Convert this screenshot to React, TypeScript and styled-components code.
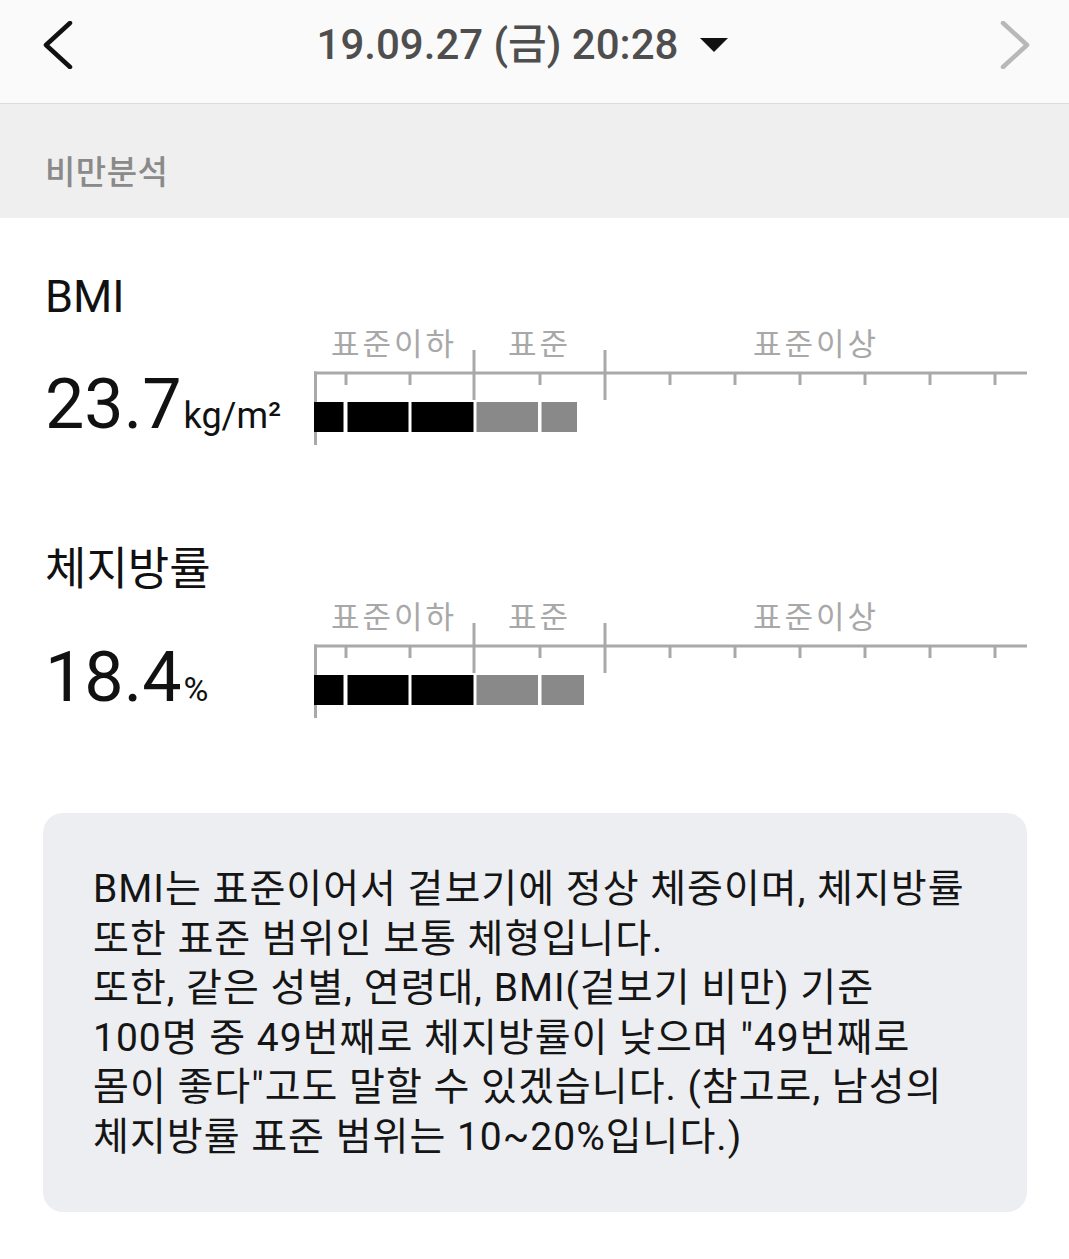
import styled, { createGlobalStyle } from "styled-components";

const GlobalStyle = createGlobalStyle`
  html, body {
    margin: 0;
    padding: 0;
    background: #ffffff;
  }
  body {
    font-family: Roboto, "Noto Sans CJK KR", sans-serif;
    color: #111;
  }
`;

const Page = styled.div`
  width: 1069px;
  min-height: 1259px;
  background: #fff;
`;

const Header = styled.header`
  height: 104px;
  background: #fafafa;
  border-bottom: 1px solid #dddddd;
  display: flex;
  align-items: center;
  justify-content: space-between;
  padding: 0 36px 14px 40px;
  box-sizing: border-box;
`;

const NavButton = styled.div`
  width: 36px;
  height: 50px;
  display: flex;
  align-items: center;
  justify-content: center;
`;

const TitleGroup = styled.div`
  display: flex;
  align-items: center;
  gap: 22px;
  margin-right: 28px;
`;

const Title = styled.span`
  font-family: Roboto, "Noto Sans CJK KR", sans-serif;
  font-size: 42px;
  font-weight: 500;
  color: #4e4e4e;
  line-height: 1;
  white-space: nowrap;
`;

const SectionBar = styled.div`
  height: 114px;
  background: #efefef;
  box-sizing: border-box;
  padding: 46px 45px 0;
`;

const SectionTitle = styled.span`
  font-family: "Noto Sans CJK KR", sans-serif;
  font-size: 33px;
  font-weight: 500;
  letter-spacing: 0.5px;
  color: #8a8a8a;
  line-height: 40px;
`;

const Content = styled.main`
  padding: 56px 42px 0 45px;
  display: flex;
  flex-direction: column;
  gap: 100px;
`;

const Metric = styled.section`
  display: flex;
  flex-direction: column;
`;

const MetricTitle = styled.div`
  font-size: 45px;
  line-height: 45px;
  color: #111;
  white-space: nowrap;
`;

const MetricRow = styled.div`
  display: grid;
  grid-template-columns: 269px 1fr;
  align-items: end;
  margin-top: 3px;
`;

const Value = styled.div`
  font-size: 70px;
  line-height: 70px;
  color: #111;
  margin-bottom: -4px;
  white-space: nowrap;
`;

const Unit = styled.span<{ $size: number }>`
  font-size: ${(p) => p.$size}px;
  margin-left: 2px;
`;

const Scale = styled.div`
  display: flex;
  flex-direction: column;
  width: 713px;
`;

const ScaleLabels = styled.div`
  display: grid;
  grid-template-columns: 160px 131px 1fr;
  height: 40px;
`;

const ScaleLabel = styled.span`
  font-family: "Noto Sans CJK KR", sans-serif;
  font-size: 31px;
  letter-spacing: 3px;
  line-height: 40px;
  color: #a8a8a8;
  text-align: center;
`;

const ScaleChart = styled.svg`
  display: block;
  margin-top: -15px;
`;

const InfoBox = styled.div`
  margin: 93px 42px 0 43px;
  background: #eceef1;
  border-radius: 20px;
  padding: 52px 20px 50px 50px;
`;

const InfoText = styled.p`
  margin: 0;
  font-family: Roboto, "Noto Sans CJK KR", sans-serif;
  font-size: 39px;
  letter-spacing: 1px;
  line-height: 49.5px;
  color: #151515;
  white-space: nowrap;
`;

const AXIS = "#a9a9a9";

const ScaleBar = ({ greyEnd }: { greyEnd: number }) => {
  const minor = [32, 96, 226, 356, 421, 486, 551, 616, 681];
  const black: [number, number][] = [
    [0, 29.5],
    [33.5, 94.5],
    [97.5, 159.5],
  ];
  const grey: [number, number][] = [
    [162.5, 224],
    [227.5, greyEnd],
  ];
  return (
    <ScaleChart width={713} height={100} viewBox="0 0 713 100">
      <line x1={0} y1={26} x2={713} y2={26} stroke={AXIS} strokeWidth={3} />
      <line x1={1.5} y1={24.5} x2={1.5} y2={98} stroke={AXIS} strokeWidth={3} />
      <line x1={160} y1={3} x2={160} y2={53} stroke={AXIS} strokeWidth={3} />
      <line x1={291} y1={3} x2={291} y2={53} stroke={AXIS} strokeWidth={3} />
      {minor.map((x) => (
        <line key={x} x1={x} y1={26} x2={x} y2={38} stroke={AXIS} strokeWidth={3} />
      ))}
      {black.map(([a, b]) => (
        <rect key={a} x={a} y={55} width={b - a} height={30} fill="#000" />
      ))}
      {grey.map(([a, b]) => (
        <rect key={a} x={a} y={55} width={b - a} height={30} fill="#898989" />
      ))}
    </ScaleChart>
  );
};

const ScaleBlock = ({ greyEnd }: { greyEnd: number }) => (
  <Scale>
    <ScaleLabels>
      <ScaleLabel>표준이하</ScaleLabel>
      <ScaleLabel>표준</ScaleLabel>
      <ScaleLabel>표준이상</ScaleLabel>
    </ScaleLabels>
    <ScaleBar greyEnd={greyEnd} />
  </Scale>
);

const App = () => {
  return (
    <Page>
      <GlobalStyle />
      <Header>
        <NavButton>
          <svg width="32" height="48" viewBox="0 0 32 48">
            <polyline
              points="28,2 4,24 28,46"
              fill="none"
              stroke="#111"
              strokeWidth="4.5"
              strokeLinecap="round"
              strokeLinejoin="round"
            />
          </svg>
        </NavButton>
        <TitleGroup>
          <Title>19.09.27 (금) 20:28</Title>
          <svg width="28" height="16" viewBox="0 0 28 16">
            <polygon points="0,1 28,1 14,15" fill="#111" />
          </svg>
        </TitleGroup>
        <NavButton>
          <svg width="32" height="48" viewBox="0 0 32 48">
            <polyline
              points="4,2 28,24 4,46"
              fill="none"
              stroke="#b8b8b8"
              strokeWidth="4.5"
              strokeLinecap="round"
              strokeLinejoin="round"
            />
          </svg>
        </NavButton>
      </Header>

      <SectionBar>
        <SectionTitle>비만분석</SectionTitle>
      </SectionBar>

      <Content>
        <Metric>
          <MetricTitle>BMI</MetricTitle>
          <MetricRow>
            <Value>
              23.7<Unit $size={36}>kg/m²</Unit>
            </Value>
            <ScaleBlock greyEnd={263} />
          </MetricRow>
        </Metric>
        <Metric>
          <MetricTitle>체지방률</MetricTitle>
          <MetricRow>
            <Value>
              18.4<Unit $size={34}>%</Unit>
            </Value>
            <ScaleBlock greyEnd={270} />
          </MetricRow>
        </Metric>
      </Content>

      <InfoBox>
        <InfoText>
          BMI는 표준이어서 겉보기에 정상 체중이며, 체지방률
          <br />
          또한 표준 범위인 보통 체형입니다.
          <br />
          또한, 같은 성별, 연령대, BMI(겉보기 비만) 기준
          <br />
          100명 중 49번째로 체지방률이 낮으며 "49번째로
          <br />
          몸이 좋다"고도 말할 수 있겠습니다. (참고로, 남성의
          <br />
          체지방률 표준 범위는 10~20%입니다.)
        </InfoText>
      </InfoBox>
    </Page>
  );
};

export default App;
